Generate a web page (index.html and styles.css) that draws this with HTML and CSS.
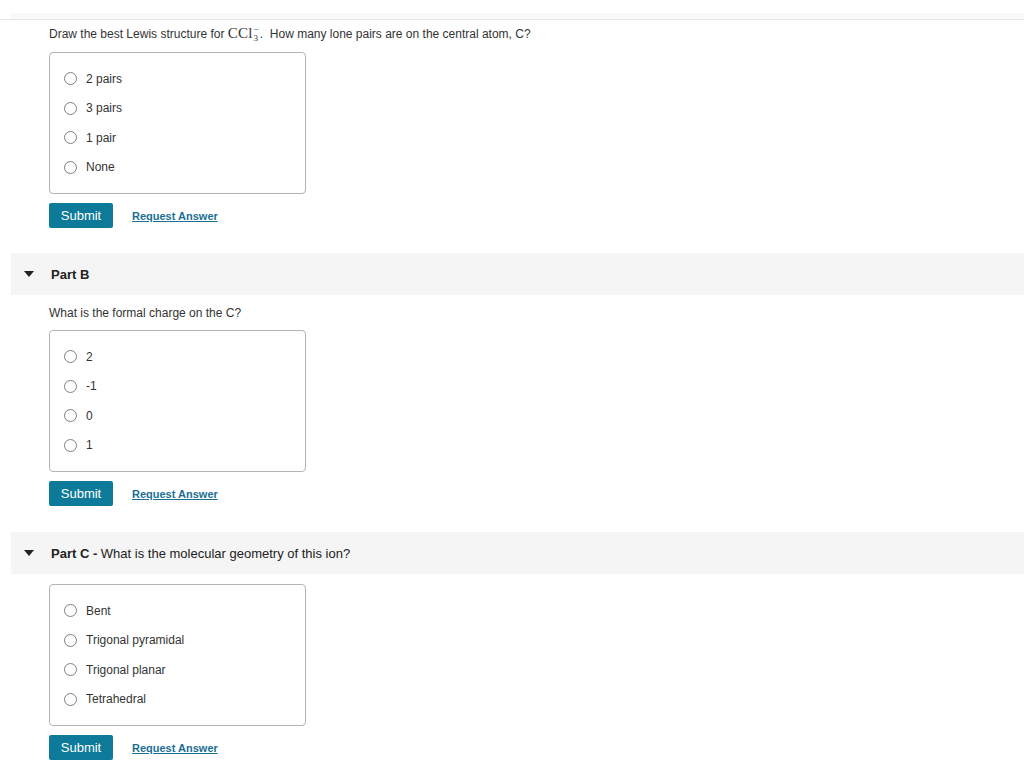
FILE: index.html
```html
<!DOCTYPE html>
<html>
<head>
<meta charset="utf-8">
<link rel="stylesheet" href="styles.css">
</head>
<body>
<div class="topbar"><div class="topband"></div></div>
<div class="part first">
  <p class="question">Draw the best Lewis structure for <span class="math">CCl<span class="subsup"><span class="sp">−</span><span class="sb">3</span></span></span>. &nbsp;How many lone pairs are on the central atom, C?</p>
  <div class="choices">
    <label class="choice"><span class="radio"></span>2 pairs</label>
    <label class="choice"><span class="radio"></span>3 pairs</label>
    <label class="choice"><span class="radio"></span>1 pair</label>
    <label class="choice"><span class="radio"></span>None</label>
  </div>
  <div class="actions"><button class="submit">Submit</button><a class="request" href="#">Request Answer</a></div>
</div>

<div class="part-header"><span class="caret"></span><span class="ptitle"><b>Part B</b></span></div>
<div class="part">
  <p class="question qb">What is the formal charge on the C?</p>
  <div class="choices">
    <label class="choice"><span class="radio"></span>2</label>
    <label class="choice"><span class="radio"></span>-1</label>
    <label class="choice"><span class="radio"></span>0</label>
    <label class="choice"><span class="radio"></span>1</label>
  </div>
  <div class="actions"><button class="submit">Submit</button><a class="request" href="#">Request Answer</a></div>
</div>

<div class="part-header hc"><span class="caret"></span><span class="ptitle"><b>Part C - </b>What is the molecular geometry of this ion?</span></div>
<div class="part pc">
  <div class="choices">
    <label class="choice"><span class="radio"></span>Bent</label>
    <label class="choice"><span class="radio"></span>Trigonal pyramidal</label>
    <label class="choice"><span class="radio"></span>Trigonal planar</label>
    <label class="choice"><span class="radio"></span>Tetrahedral</label>
  </div>
  <div class="actions"><button class="submit">Submit</button><a class="request" href="#">Request Answer</a></div>
</div>
</body>
</html>
```
FILE: styles.css
```css
html, body {
  margin: 0;
  padding: 0;
  background: #fff;
}
body {
  font-family: "Liberation Sans", Arial, sans-serif;
  font-size: 12px;
  color: #333;
  width: 1024px;
}
.topbar {
  padding-top: 13px;
  border-bottom: 1px solid #e6e6e6;
}
.topband {
  margin-left: 10px;
  height: 6px;
  background: #f9f9f9;
}
.part {
  padding-left: 49px;
}
.question {
  margin: 0;
  line-height: 16px;
  height: 16px;
  padding-top: 5px;
  margin-bottom: 11px;
}
.qb {
  padding-top: 10px;
  margin-bottom: 9px;
}
.pc {
  padding-top: 10px;
}
.math {
  font-family: "Liberation Serif", "Times New Roman", serif;
  font-size: 15px;
  letter-spacing: 0.2px;
}
.subsup {
  display: inline-flex;
  flex-direction: column;
  justify-content: space-between;
  vertical-align: top;
  height: 17px;
  font-size: 9px;
  line-height: 8px;
  margin-left: 1px;
  margin-right: 1px;
}
.choices {
  border: 1px solid #b3b3b3;
  border-radius: 4px;
  padding: 11px 0 11px 14px;
  width: 241px;
  display: flex;
  flex-direction: column;
}
.choice {
  display: flex;
  align-items: center;
  height: 29.5px;
  line-height: 16px;
}
.radio {
  width: 11px;
  height: 11px;
  border: 1px solid #808080;
  border-radius: 50%;
  margin-right: 9px;
  flex: none;
}
.actions {
  display: flex;
  align-items: center;
  margin-top: 9px;
  height: 25px;
}
.submit {
  width: 64px;
  height: 25px;
  border: none;
  border-radius: 2px;
  background: #0d7a99;
  color: #fff;
  font-family: "Liberation Sans", Arial, sans-serif;
  font-size: 13px;
  padding: 0;
  margin: 0;
}
.request {
  margin-left: 19px;
  color: #1b6f95;
  font-weight: bold;
  font-size: 11px;
  text-decoration: underline;
}
.part-header {
  margin-top: 25px;
  margin-left: 11px;
  height: 42px;
  background: #f5f5f5;
  display: flex;
  align-items: center;
}
.part-header.hc {
  margin-top: 26px;
}
.caret {
  width: 0;
  height: 0;
  border-left: 5px solid transparent;
  border-right: 5px solid transparent;
  border-top: 6px solid #222;
  margin-left: 13px;
  margin-right: 17px;
}
.ptitle {
  font-size: 13px;
  color: #222;
}
.ptitle b {
  font-weight: bold;
}
```
